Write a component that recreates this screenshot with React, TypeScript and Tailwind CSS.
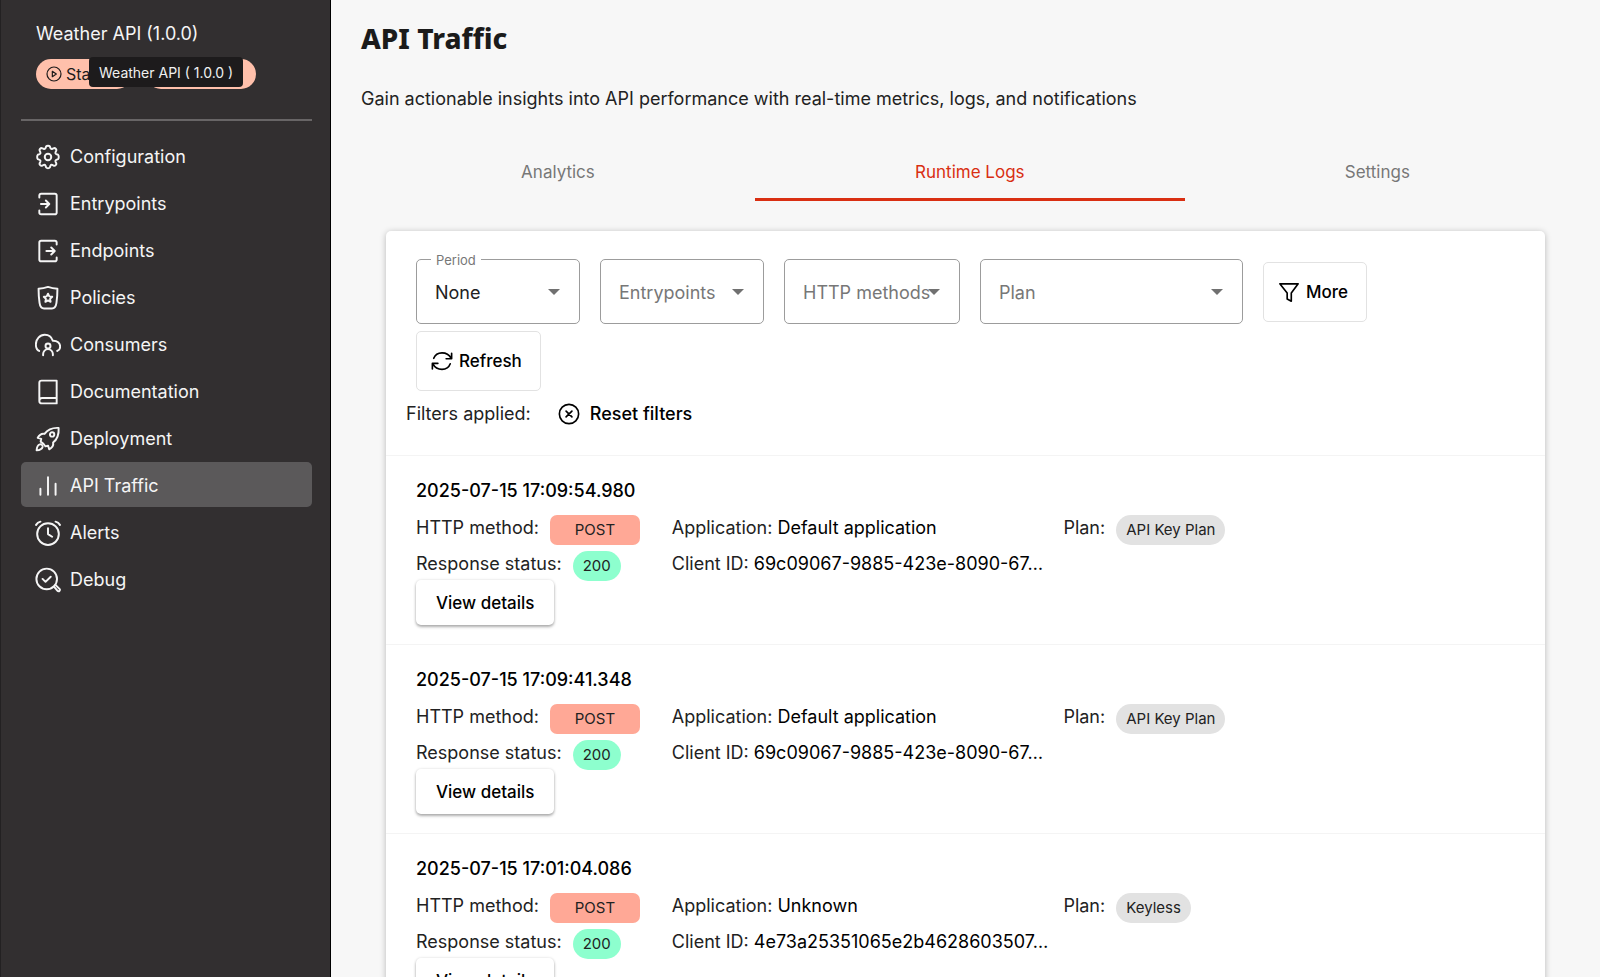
import React from "react";

const stroke = {
  fill: "none",
  stroke: "currentColor",
  strokeWidth: 1.8,
  strokeLinecap: "round" as const,
  strokeLinejoin: "round" as const,
};

function Icon({ children, className = "size-[26px]" }: { children: React.ReactNode; className?: string }) {
  return (
    <svg viewBox="0 0 24 24" className={`shrink-0 ${className}`} aria-hidden="true" {...stroke}>
      {children}
    </svg>
  );
}

const nav: { label: string; icon: React.ReactNode; active?: boolean }[] = [
  {
    label: "Configuration",
    icon: (
      <>
        <circle cx="12" cy="12" r="3" />
        <path d="M10.3 2.2c.6-.8 2.8-.8 3.4 0l.6 1.700c.3.7 1 .9 1.600.7l1.700-.8c1-.3 2.400 1.100 2.100 2.100l-.8 1.800c-.2.6.1 1.300.7 1.600l1.700.6c.8.6.8 3.500 0 4.100l-1.700.6c-.6.3-.9 1-.7 1.600l.8 1.800c.3 1-1.100 2.400-2.100 2.100l-1.700-.8c-.6-.2-1.300.1-1.600.7l-.6 1.700c-.6.8-2.800.8-3.400 0l-.6-1.700c-.3-.6-1-.9-1.600-.7l-1.800.8c-1 .3-2.400-1.100-2.100-2.100l.8-1.800c.2-.6-.1-1.300-.7-1.600l-1.700-.6c-.8-.6-.8-3.500 0-4.100l1.700-.6c.6-.3.9-1 .7-1.600l-.8-1.800c-.3-1 1.100-2.400 2.100-2.100l1.800.8c.6.2 1.300 0 1.600-.7z" />
      </>
    ),
  },
  {
    label: "Entrypoints",
    icon: <path d="M4 6V4.200C4 3 4.500 2.500 5.700 2.500h12.600c1.200 0 1.700.5 1.700 1.700v15.600c0 1.200-.5 1.700-1.700 1.700H5.700C4.500 21.500 4 21 4 19.800V18M5.500 12H13M10 8.800l3.200 3.200-3.200 3.200" />,
  },
  {
    label: "Endpoints",
    icon: <path d="M20 6V4.200c0-1.200-.5-1.700-1.700-1.700H5.700C4.500 2.500 4 3 4 4.200v15.600c0 1.200.5 1.700 1.700 1.700h12.600c1.200 0 1.700-.5 1.700-1.700V18M10.500 12h7.500M15 8.800l3.200 3.200-3.200 3.200" />,
  },
  {
    label: "Policies",
    icon: (
      <>
        <path d="M3.300 3.500c3-.2 5.700-.7 8.700-1.700 3 1 5.700 1.500 8.700 1.700 0 4-.3 9-.9 13-.4 3-1.600 5.200-4.200 5.200H8.400c-2.600 0-3.800-2.200-4.200-5.200-.6-4-.9-9-.9-13z" />
        <path d="M12 8l1.200 2.500 2.700.4-2 1.900.5 2.700-2.400-1.300-2.400 1.300.5-2.700-2-1.900 2.700-.4z" />
      </>
    ),
  },
  {
    label: "Consumers",
    icon: (
      <>
        <path d="M3.800 17.500C1.900 16.500.8 14.300.8 11.500c0-5 3.700-9 8.200-9 3.400 0 6.300 1.900 7.400 5.500 4.200-.2 6.800 2.300 6.800 5.500 0 2-1 3.500-2.700 4" />
        <circle cx="12" cy="13" r="2.300" />
        <path d="M7.500 21.500v-1.200c0-2.400 2-4.500 4.500-4.500s4.500 2.100 4.500 4.500v1.200" />
      </>
    ),
  },
  {
    label: "Documentation",
    icon: <path d="M4 20V3.500C4 2.200 4.600 1.500 6 1.500h14v21H6.500C5 22.500 4 21.700 4 20.200 4 18.500 5 17.500 6.500 17.500H20" />,
  },
  {
    label: "Deployment",
    icon: (
      <>
        <path d="M21.800 1.800c-6-.4-10 1.500-13 5.500-2.600-.6-4.600.6-6.300 3.600l3.300 1-.6 2.500c1.600 1 3.500 2.800 4.400 4.400l2.500-.6 1 3.300c3-1.700 4.200-3.700 3.600-6.300 4-3 5.500-7.400 5.100-13.400z" />
        <circle cx="15.800" cy="7.800" r="2" />
        <path d="M4.500 17c-1.700.5-2.800 2.300-3 5.400 3.200-.2 5-1.300 5.500-3.100.3-1.500-1-2.700-2.500-2.300z" />
      </>
    ),
  },
  {
    label: "API Traffic",
    active: true,
    icon: <path d="M5 14.500V20M12 4v16M19 10v10" />,
  },
  {
    label: "Alerts",
    icon: (
      <>
        <circle cx="12" cy="13" r="10" />
        <path d="M12 7.500V13l3.800 2.500M1 4.500c.8-1.300 2.200-2.500 4-3M23 4.500c-.8-1.300-2.200-2.500-4-3" />
      </>
    ),
  },
  {
    label: "Debug",
    icon: (
      <>
        <circle cx="10.800" cy="11" r="9.500" />
        <path d="M7 11l2.700 2.700 4.800-4.700M17.500 18.200l3.300 3.800c.5.600 1.300.6 1.800 0s.5-1.300 0-1.800l-3.500-3.500" />
      </>
    ),
  },
];

function Chip({ children, className }: { children: React.ReactNode; className: string }) {
  return (
    <span className={`inline-flex h-[30px] items-center gap-1 rounded-full px-2.5 ${className}`}>{children}</span>
  );
}

function Sidebar() {
  return (
    <aside className="w-[331px] shrink-0 border-x border-r-black border-l-[#232122] bg-[#322f30] pr-[18px] pl-5 text-[#f5f5f5]">
      <div className="px-[15px] pt-[21px] text-[18px] leading-[26px]">Weather API (1.0.0)</div>
      <div className="relative mx-[15px] mt-3 flex gap-3.5 text-base text-[#1e1b1b]">
        <Chip className="w-24 bg-[#ffc0ab]">
          <Icon className="size-4">
            <circle cx="12" cy="12" r="10.500" />
            <path d="M9.500 8v8l6-4z" />
          </Icon>
          Started
        </Chip>
        <Chip className="w-[110px] justify-center bg-[#ffc0ab]">Published</Chip>
        <div
          role="tooltip"
          className="absolute -top-0.5 left-[53px] flex h-[30px] items-center rounded bg-[#1d1b1c] px-2.5 text-[14px] whitespace-nowrap text-[#f0f0f0]"
        >
          Weather API ( 1.0.0 )
        </div>
      </div>
      <hr className="mt-[30px] border-t-2 border-[#686566]" />
      <nav className="mt-3 flex flex-col gap-0.5" aria-label="API">
        {nav.map((item) => (
          <a
            key={item.label}
            href="#"
            aria-current={item.active ? "page" : undefined}
            className={`flex h-[45px] items-center gap-[9px] rounded-[5px] px-3.5 pt-0.5 text-[18px] ${
              item.active ? "bg-[#5b595a]" : ""
            }`}
          >
            <Icon>{item.icon}</Icon>
            {item.label}
          </a>
        ))}
      </nav>
    </aside>
  );
}

function Filter({
  id,
  label,
  value,
  width,
}: {
  id: string;
  label: string;
  value?: string;
  width: string;
}) {
  return (
    <div className={`relative h-[65px] rounded-[5px] border border-[#9c9c9c] ${width}`}>
      {value ? (
        <label htmlFor={id} className="absolute -top-2 left-3.5 bg-white px-[5px] text-[13px] leading-4 text-[#777]">
          {label}
        </label>
      ) : null}
      <select
        id={id}
        aria-label={value ? undefined : label}
        className={`size-full appearance-none bg-transparent pt-0.5 pl-[18px] text-[18px] outline-none ${
          value ? "text-[#222]" : "text-[#777]"
        }`}
      >
        <option>{value ?? label}</option>
      </select>
      <svg viewBox="0 0 12 6" className="pointer-events-none absolute top-[29px] right-[19px] h-1.5 w-3 fill-[#707070]" aria-hidden="true">
        <path d="M0 0h12L6 6z" />
      </svg>
    </div>
  );
}

const outlineButton =
  "flex h-[60px] items-center gap-1.5 rounded-[5px] border border-[#e2e2e2] bg-white pt-0.5 pr-[18px] pl-3.5 text-[17px] font-medium text-black";

function Filters() {
  return (
    <div className="px-[30px] pt-7">
      <div className="flex flex-wrap items-center gap-x-5 gap-y-[7px]">
        <Filter id="period" label="Period" value="None" width="w-[164px]" />
        <Filter id="entrypoints" label="Entrypoints" width="w-[164px]" />
        <Filter id="methods" label="HTTP methods" width="w-[176px]" />
        <Filter id="plan" label="Plan" width="w-[263px]" />
        <button className={outlineButton}>
          <svg viewBox="0 0 24 24" className="size-[22px]" aria-hidden="true" {...stroke}>
            <path d="M2 2h20l-7.500 10v9l-4.500-2.500V12z" />
          </svg>
          More
        </button>
        <div className="w-full">
          <button className={outlineButton}>
            <svg viewBox="0 0 24 24" className="size-[22px]" aria-hidden="true" {...stroke}>
              <path d="M22.500 2.500v6h-6M1.500 19.500v-6h6M3 8c1.300-3.600 4.800-6 9-6 4.500 0 8 2.300 10 6M21 14c-1.300 3.600-4.800 6-9 6-4.500 0-8-2.300-10-6" />
            </svg>
            Refresh
          </button>
        </div>
      </div>
      <div className="-ml-2.5 flex h-16 items-start gap-[27px] pt-2.5 text-[18px] leading-[26px] text-[#222]">
        <span>Filters applied:</span>
        <button className="flex items-center gap-2.5 font-medium text-black">
          <Icon className="size-[22px]">
            <circle cx="12" cy="12" r="10.500" />
            <path d="M8.800 8.800l6.400 6.400M15.200 8.800l-6.400 6.400" />
          </Icon>
          Reset filters
        </button>
      </div>
    </div>
  );
}

const logs = [
  { time: "2025-07-15 17:09:54.980", app: "Default application", client: "69c09067-9885-423e-8090-67…", plan: "API Key Plan" },
  { time: "2025-07-15 17:09:41.348", app: "Default application", client: "69c09067-9885-423e-8090-67…", plan: "API Key Plan" },
  { time: "2025-07-15 17:01:04.086", app: "Unknown", client: "4e73a25351065e2b4628603507…", plan: "Keyless" },
];

function LogRow({ log }: { log: (typeof logs)[number] }) {
  return (
    <article className="border-t border-[#f4f4f4] px-[30px] pt-[21px] pb-[19px] text-[18px] text-[#222]">
      <h2 className="leading-7 font-medium text-black">{log.time}</h2>
      <div className="mt-[7px] grid grid-cols-[256fr_392fr_452fr] leading-8">
        <div className="flex h-9 gap-[11px]">
          HTTP method:
          <span className="mt-[3px] flex h-[30px] w-[90px] items-center justify-center rounded-[7px] bg-[#ffa896] text-[15px]">
            POST
          </span>
        </div>
        <div className="h-9">
          Application: <span className="text-black">{log.app}</span>
        </div>
        <div className="flex h-9 gap-[11px]">
          Plan:
          <Chip className="mt-[3px] bg-[#e2e2e2] text-[15px]">{log.plan}</Chip>
        </div>
        <div className="flex h-9 gap-[11px]">
          Response status:
          <Chip className="mt-[3px] bg-[#8dffce] text-[15px]">200</Chip>
        </div>
        <div className="h-9">
          Client ID: <span className="text-black">{log.client}</span>
        </div>
      </div>
      <button className="relative -mt-1 flex h-[45px] items-center rounded-[5px] bg-white px-5 pt-0.5 text-[17px] font-medium text-black shadow-[0_2px_3px_rgba(0,0,0,0.3),0_0_3px_rgba(0,0,0,0.12)]">
        View details
      </button>
    </article>
  );
}

export default function App() {
  return (
    <div className="flex h-screen overflow-hidden bg-[#f7f7f7] font-['Inter',sans-serif]">
      <Sidebar />
      <main className="min-w-0 flex-1 px-[30px]">
        <h1 className="pt-[18px] font-['Noto_Sans',sans-serif] text-[28px] leading-10 font-extrabold text-[#1b1b1b]">
          API Traffic
        </h1>
        <p className="mt-7 text-[18px] leading-[26px] text-[#222]">
          Gain actionable insights into API performance with real-time metrics, logs, and notifications
        </p>
        <div role="tablist" className="mt-[30px] flex text-[17px] text-[#777]">
          <button role="tab" aria-selected="false" className="h-[59px] flex-auto border-b-3 border-transparent pt-1.5">
            Analytics
          </button>
          <button role="tab" aria-selected="true" className="h-[59px] flex-auto border-b-3 border-[#d92f12] pt-1.5 text-[#d92f12]">
            Runtime Logs
          </button>
          <button role="tab" aria-selected="false" className="h-[59px] flex-auto border-b-3 border-transparent pt-1.5">
            Settings
          </button>
        </div>
        <section className="mx-[25px] mt-[30px] rounded-[5px] bg-white shadow-[0_1px_6px_rgba(0,0,0,0.25)]">
          <Filters />
          {logs.map((log) => (
            <LogRow key={log.time} log={log} />
          ))}
        </section>
      </main>
    </div>
  );
}
